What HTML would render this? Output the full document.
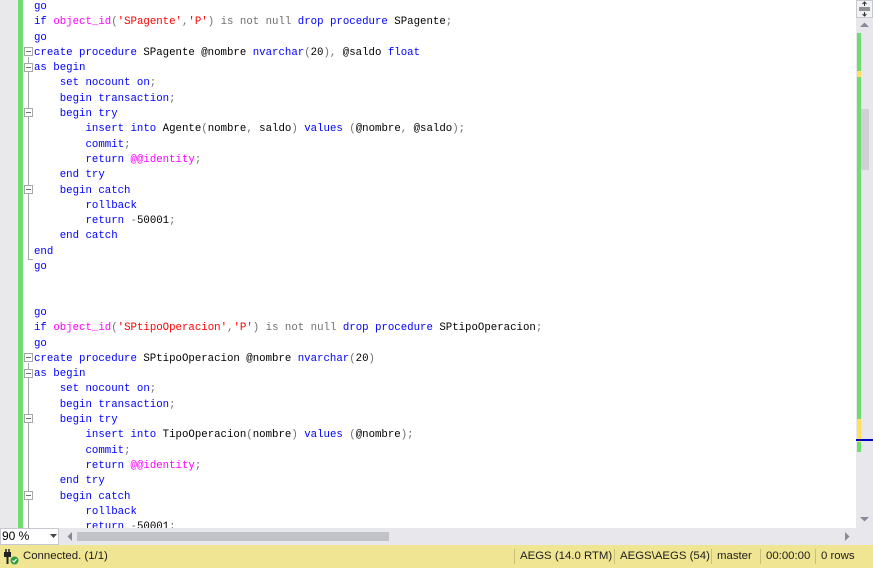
<!DOCTYPE html>
<html><head><meta charset="utf-8"><style>
*{margin:0;padding:0;box-sizing:border-box}
body{width:873px;height:568px;overflow:hidden;background:#fff;position:relative;font-family:"Liberation Sans",sans-serif}
#gut{position:absolute;left:0;top:0;width:18px;height:528px;background:#e9e9ec}
#grn{position:absolute;left:18px;top:0;width:5px;height:528px;background:#6fdc6f}
.code{position:absolute;left:34px;top:0px;font-family:"Liberation Mono",monospace;font-size:10.72px;line-height:15.3px;white-space:pre;color:#000}
.k{color:#0000ff}.f{color:#ff00ff}.s{color:#ff0000}.g{color:#707070}
.fold{position:absolute;left:24px;width:9px;height:9px;border:1px solid #a8a8a8;background:#fff}
.fold:after{content:"";position:absolute;left:1px;top:3px;width:5px;height:1px;background:#707070}
.vl{position:absolute;left:28px;width:1px;background:#a8a8a8}
.hl{position:absolute;left:28px;width:5px;height:1px;background:#a8a8a8}
#vs{position:absolute;left:856px;top:0;width:17px;height:528px;background:#e8e8ec}
#hs{position:absolute;left:0;top:528px;width:873px;height:17px;background:#e8e8ec}
#st{position:absolute;left:0;top:545px;width:873px;height:23px;background:#efe593;font-size:11.4px;color:#1e1e1e}
#st span{position:absolute;top:5px}
.sep{position:absolute;top:4px;width:1px;height:15px;background:#c9bf78}
</style></head><body>
<div id="gut"></div><div id="grn"></div>
<div class="code"><span class="k">go</span>
<span class="k">if</span> <span class="f">object_id</span><span class="g">(</span><span class="s">'SPagente'</span><span class="g">,</span><span class="s">'P'</span><span class="g">) is not null</span> <span class="k">drop procedure</span> SPagente<span class="g">;</span>
<span class="k">go</span>
<span class="k">create procedure</span> SPagente @nombre <span class="k">nvarchar</span><span class="g">(</span>20<span class="g">),</span> @saldo <span class="k">float</span>
<span class="k">as begin</span>
    <span class="k">set nocount on</span><span class="g">;</span>
    <span class="k">begin transaction</span><span class="g">;</span>
    <span class="k">begin try</span>
        <span class="k">insert into</span> Agente<span class="g">(</span>nombre<span class="g">,</span> saldo<span class="g">)</span> <span class="k">values</span> <span class="g">(</span>@nombre<span class="g">,</span> @saldo<span class="g">);</span>
        <span class="k">commit</span><span class="g">;</span>
        <span class="k">return</span> <span class="f">@@identity</span><span class="g">;</span>
    <span class="k">end try</span>
    <span class="k">begin catch</span>
        <span class="k">rollback</span>
        <span class="k">return</span> <span class="g">-</span>50001<span class="g">;</span>
    <span class="k">end catch</span>
<span class="k">end</span>
<span class="k">go</span>


<span class="k">go</span>
<span class="k">if</span> <span class="f">object_id</span><span class="g">(</span><span class="s">'SPtipoOperacion'</span><span class="g">,</span><span class="s">'P'</span><span class="g">) is not null</span> <span class="k">drop procedure</span> SPtipoOperacion<span class="g">;</span>
<span class="k">go</span>
<span class="k">create procedure</span> SPtipoOperacion @nombre <span class="k">nvarchar</span><span class="g">(</span>20<span class="g">)</span>
<span class="k">as begin</span>
    <span class="k">set nocount on</span><span class="g">;</span>
    <span class="k">begin transaction</span><span class="g">;</span>
    <span class="k">begin try</span>
        <span class="k">insert into</span> TipoOperacion<span class="g">(</span>nombre<span class="g">)</span> <span class="k">values</span> <span class="g">(</span>@nombre<span class="g">);</span>
        <span class="k">commit</span><span class="g">;</span>
        <span class="k">return</span> <span class="f">@@identity</span><span class="g">;</span>
    <span class="k">end try</span>
    <span class="k">begin catch</span>
        <span class="k">rollback</span>
        <span class="k">return</span> <span class="g">-</span>50001<span class="g">;</span>
</div>
<div class="vl" style="top:57px;height:203px"></div>
<div class="hl" style="top:259px"></div>
<div class="vl" style="top:363px;height:165px"></div>
<div class="fold" style="top:47px"></div>
<div class="fold" style="top:63px"></div>
<div class="fold" style="top:108px"></div>
<div class="fold" style="top:185px"></div>
<div class="fold" style="top:353px"></div>
<div class="fold" style="top:369px"></div>
<div class="fold" style="top:414px"></div>
<div class="fold" style="top:491px"></div>
<div id="vs">
 <div style="position:absolute;left:0;top:0;width:17px;height:18px;border:1px solid #c8c8d0;background:#f2f2f5"></div>
 <svg style="position:absolute;left:0;top:0" width="17" height="18"><line x1="3" y1="8" x2="14" y2="8" stroke="#333"/><line x1="3" y1="10" x2="14" y2="10" stroke="#333"/><path d="M8.5 2v4M8.5 12v4M6.5 4l2-2 2 2M6.5 14l2 2 2-2" stroke="#333" fill="none"/></svg>
 <svg style="position:absolute;left:0;top:20px" width="17" height="10"><path d="M4 7l4.5-4.5L13 7z" fill="#868999"/></svg>
 <div style="position:absolute;left:1px;top:33px;width:4px;height:419px;background:#6fdc6f"></div>
 <div style="position:absolute;left:1px;top:71px;width:4px;height:6px;background:#ffe060"></div>
 <div style="position:absolute;left:1px;top:419px;width:4px;height:23px;background:#ffe060"></div>
 <div style="position:absolute;left:0;top:439px;width:17px;height:2px;background:#0000c0"></div>
 <div style="position:absolute;left:5px;top:109px;width:8px;height:61px;background:#d0d1d7"></div>
 <svg style="position:absolute;left:0;top:514px" width="17" height="10"><path d="M4 3l4.5 4.5L13 3z" fill="#868999"/></svg>
</div>
<div id="hs">
 <div style="position:absolute;left:0;top:0;width:59px;height:17px;background:#fff;border:1px solid #c8c8d0;font-size:12px;line-height:15px;padding-left:1px;color:#000">90 %</div>
 <svg style="position:absolute;left:50px;top:6px" width="7" height="5"><path d="M0 0h7L3.5 4z" fill="#444"/></svg>
 <svg style="position:absolute;left:66px;top:3px" width="8" height="11"><path d="M6 1L1.5 5.5 6 10z" fill="#868999"/></svg>
 <div style="position:absolute;left:77px;top:4px;width:312px;height:9px;background:#c2c3c9"></div>
 <svg style="position:absolute;left:843px;top:3px" width="8" height="11"><path d="M2 1l4.5 4.5L2 10z" fill="#868999"/></svg>
</div>
<div id="st">
 <svg style="position:absolute;left:3px;top:4px" width="16" height="16"><path d="M3 0v3M6 0v3" stroke="#222" stroke-width="1.5"/><rect x="1" y="3" width="7" height="5" fill="#222"/><path d="M4.5 8v7" stroke="#222" stroke-width="2"/><circle cx="11.5" cy="11.5" r="4" fill="#2e9e3e"/><path d="M9.5 11.5l1.5 1.5 2.5-3" stroke="#fff" stroke-width="1.2" fill="none"/></svg>
 <span style="left:23px">Connected. (1/1)</span>
 <div class="sep" style="left:514px"></div><span style="left:520px">AEGS (14.0 RTM)</span>
 <div class="sep" style="left:614px"></div><span style="left:620px">AEGS\AEGS (54)</span>
 <div class="sep" style="left:711px"></div><span style="left:717px">master</span>
 <div class="sep" style="left:760px"></div><span style="left:766px">00:00:00</span>
 <div class="sep" style="left:815px"></div><span style="left:821px">0 rows</span>
</div>
</body></html>
